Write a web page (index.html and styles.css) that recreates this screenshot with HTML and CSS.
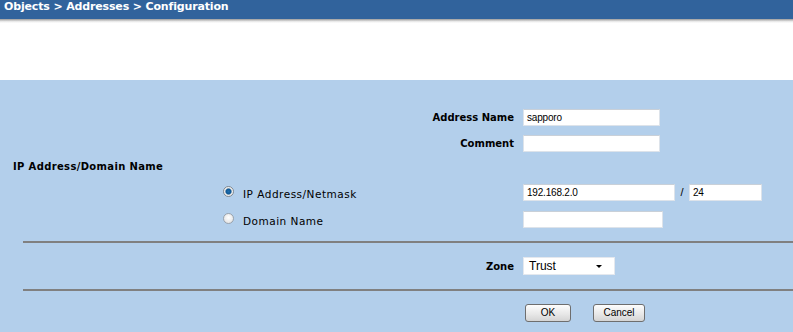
FILE: index.html
```html
<!DOCTYPE html>
<html>
<head>
<meta charset="utf-8">
<link rel="stylesheet" href="styles.css">
</head>
<body>
<div class="top">
  <div class="header">Objects &gt; Addresses &gt; Configuration</div>
  <div class="shadow"></div>
</div>
<div class="form">
  <div class="row r1">
    <div class="lbl">Address Name</div>
    <div class="field w137">sapporo</div>
  </div>
  <div class="row r2">
    <div class="lbl">Comment</div>
    <div class="field w137"></div>
  </div>
  <div class="section">IP Address/Domain Name</div>
  <div class="row r3">
    <div class="opt"><span class="radio on"></span><span class="optlbl">IP Address/Netmask</span></div>
    <div class="field w152">192.168.2.0</div>
    <span class="slash">/</span>
    <div class="field w73">24</div>
  </div>
  <div class="row r4">
    <div class="opt"><span class="radio"></span><span class="optlbl">Domain Name</span></div>
    <div class="field w140"></div>
  </div>
  <div class="rule l1"></div>
  <div class="row r5">
    <div class="lbl">Zone</div>
    <div class="select"><span>Trust</span><span class="arrow"></span></div>
  </div>
  <div class="rule l2"></div>
  <div class="buttons">
    <div class="btn ok">OK</div>
    <div class="btn cancel">Cancel</div>
  </div>
</div>
</body>
</html>
```
FILE: styles.css
```css
html, body {
  margin: 0;
  padding: 0;
}
body {
  width: 793px;
  height: 332px;
  background: #b3cfeb;
  font-family: "DejaVu Sans", Verdana, sans-serif;
  overflow: hidden;
}
.top {
  height: 80px;
  background: #ffffff;
}
.header {
  height: 19px;
  background: #31639c;
  color: #ffffff;
  font-weight: bold;
  font-size: 11px;
  line-height: 14px;
  padding-left: 4px;
  letter-spacing: -0.15px;
}
.shadow {
  height: 4px;
  background: linear-gradient(#9a9a9a, #e8e8e8 60%, #ffffff);
}
.form {
  padding-top: 28px;
}
.row {
  display: flex;
  align-items: center;
  height: 19px;
}
.r2 { margin-top: 7px; }
.lbl {
  width: 514px;
  margin-right: 9px;
  text-align: right;
  font-weight: bold;
  font-size: 10px;
  color: #000;
}
.field {
  box-sizing: border-box;
  height: 17px;
  background: #fff;
  border: 1px solid #dde3ea;
  border-top-color: #c9d0d8;
  font-family: "Liberation Sans", Arial, sans-serif;
  font-size: 10px;
  line-height: 15px;
  padding-left: 3px;
  color: #000;
  letter-spacing: -0.2px;
}
.w137 { width: 137px; }
.w152 { width: 152px; }
.w73 { width: 73px; }
.w140 { width: 140px; }
.section {
  margin-top: 7px;
  height: 14px;
  line-height: 14px;
  padding-left: 13px;
  font-weight: bold;
  font-size: 10px;
  letter-spacing: 0.35px;
}
.r3 { margin-top: 9px; height: 18px; }
.r4 { margin-top: 9px; height: 18px; }
.opt {
  width: 523px;
  box-sizing: border-box;
  padding-left: 223px;
  display: flex;
  align-items: center;
}
.radio {
  width: 11px;
  height: 11px;
  border-radius: 50%;
  box-sizing: border-box;
  border: 1px solid #9aa3ad;
  background: radial-gradient(circle at 50% 40%, #ffffff, #dcdcdc);
  margin-right: 9px;
  position: relative;
  top: -1px;
}
.radio.on {
  background: radial-gradient(circle at 50% 50%, #1e6fb0 0, #0f5894 2.5px, #e6e6e6 3.6px, #ffffff 5px);
  border-color: #808890;
}
.optlbl {
  font-size: 10.5px;
  color: #000;
  position: relative;
  top: 2px;
  letter-spacing: 0.5px;
}
.slash {
  font-family: "Liberation Sans", Arial, sans-serif;
  font-size: 11px;
  width: 14px;
  text-align: center;
}
.rule {
  margin-left: 23px;
  height: 2px;
  background: #808080;
}
.l1 { margin-top: 13px; }
.r5 { margin-top: 14px; height: 18px; }
.select {
  box-sizing: border-box;
  width: 92px;
  height: 18px;
  background: #fff;
  border: 1px solid #e4e8ee;
  display: flex;
  align-items: center;
  justify-content: space-between;
  padding: 0 12px 0 5px;
  font-family: "Liberation Sans", Arial, sans-serif;
  font-size: 12px;
  color: #000;
}
.arrow {
  width: 0;
  height: 0;
  border-left: 3px solid transparent;
  border-right: 3px solid transparent;
  border-top: 3px solid #000;
}
.l2 { margin-top: 14px; }
.buttons {
  margin-top: 13px;
  display: flex;
  padding-left: 525px;
  gap: 22px;
}
.btn {
  box-sizing: border-box;
  height: 18px;
  border: 1px solid #6e6e6e;
  border-radius: 3px;
  background: linear-gradient(#fdfdfd, #e6e6e6 60%, #d4d4d4);
  font-family: "Liberation Sans", Arial, sans-serif;
  font-size: 10px;
  line-height: 16px;
  text-align: center;
  color: #000;
}
.ok { width: 46px; }
.cancel { width: 52px; }
```
